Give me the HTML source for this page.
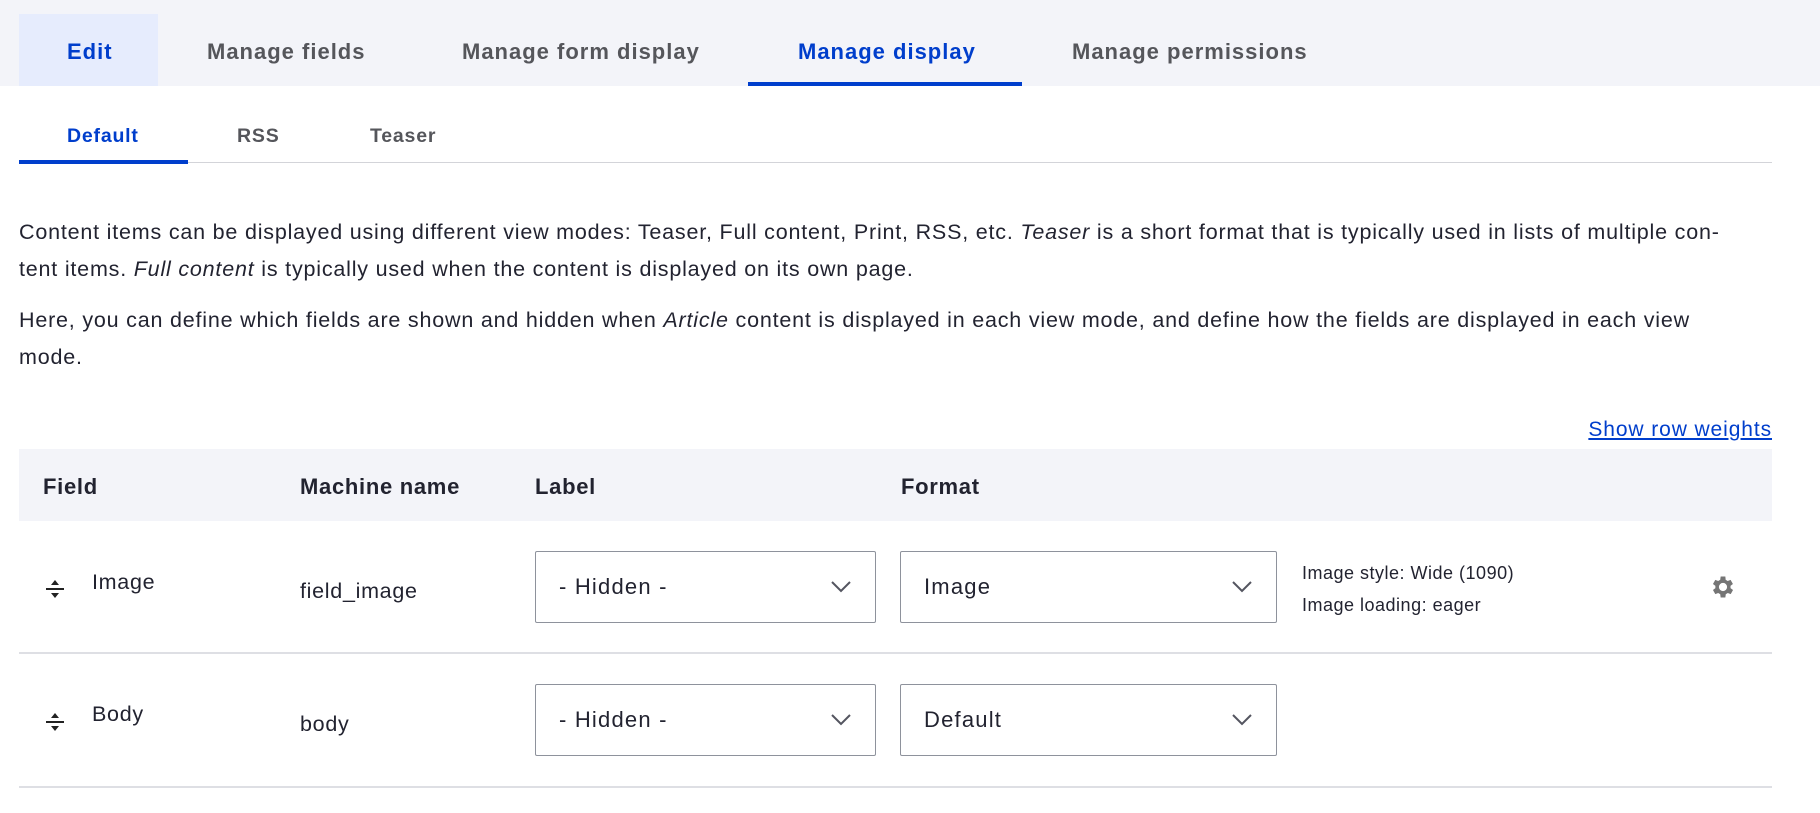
<!DOCTYPE html>
<html><head><meta charset="utf-8">
<style>
*{box-sizing:border-box;margin:0;padding:0}
body{width:1820px;height:813px;background:#fff;font-family:"Liberation Sans",sans-serif;color:#222330;position:relative;overflow:hidden}
.abs{position:absolute;white-space:nowrap}
.topbar{position:absolute;left:0;top:0;width:1820px;height:86px;background:#f3f4f9}
.tab{position:absolute;top:38px;font-weight:bold;font-size:22px;letter-spacing:1px;color:#55565b;line-height:28px}
.stab{position:absolute;top:124px;font-weight:bold;font-size:19.5px;letter-spacing:0.8px;color:#55565b;line-height:24px}
p.t{position:absolute;left:19px;font-size:21.5px;letter-spacing:0.8px;line-height:37px;width:1790px;color:#222330;white-space:nowrap}
.sel{position:absolute;height:72px;border:1px solid #8e929c;border-radius:2px;background:#fff;font-size:22px;letter-spacing:1.2px;line-height:70px;padding-left:23px}
.sel svg{position:absolute;right:24px;top:29px}
.cell{position:absolute;font-size:21.5px;letter-spacing:0.7px;line-height:28px}
.hd{position:absolute;top:473px;font-weight:bold;font-size:22px;letter-spacing:0.7px;line-height:28px}
</style></head><body>
<div class="topbar"></div>
<div class="abs" style="left:19px;top:14px;width:139px;height:72px;background:#e6ecfd"></div>
<div class="tab" style="left:67px;color:#003ecc">Edit</div>
<div class="tab" style="left:207px">Manage fields</div>
<div class="tab" style="left:462px">Manage form display</div>
<div class="tab" style="left:798px;color:#003ecc">Manage display</div>
<div class="tab" style="left:1072px">Manage permissions</div>
<div class="abs" style="left:748px;top:82px;width:274px;height:4px;background:#003ecc"></div>

<div class="stab" style="left:67px;color:#003ecc">Default</div>
<div class="stab" style="left:237px">RSS</div>
<div class="stab" style="left:370px">Teaser</div>
<div class="abs" style="left:19px;top:162px;width:1753px;height:1px;background:#d3d4d9"></div>
<div class="abs" style="left:19px;top:160px;width:169px;height:4px;background:#003ecc"></div>

<p class="t" style="top:214px">Content items can be displayed using different view modes: Teaser, Full content, Print, RSS, etc. <i>Teaser</i> is a short format that is typically used in lists of multiple con-<br>tent items. <i>Full content</i> is typically used when the content is displayed on its own page.</p>
<p class="t" style="top:302px">Here, you can define which fields are shown and hidden when <i>Article</i> content is displayed in each view mode, and define how the fields are displayed in each view<br>mode.</p>

<div class="abs" style="right:48px;top:417px;font-size:21px;letter-spacing:0.9px;line-height:26px;color:#003ecc;text-decoration:underline">Show row weights</div>

<div class="abs" style="left:19px;top:449px;width:1753px;height:72px;background:#f3f4f9"></div>
<div class="hd" style="left:43px">Field</div>
<div class="hd" style="left:300px">Machine name</div>
<div class="hd" style="left:535px">Label</div>
<div class="hd" style="left:901px">Format</div>

<!-- row 1 -->
<svg class="abs" style="left:44px;top:578px" width="22" height="22" viewBox="0 0 22 22"><path d="M11 2 L15 7 L7 7Z M2 10 H20 V12 H2Z M11 20 L15 15 L7 15Z" fill="#222"/></svg>
<div class="cell" style="left:92px;top:568px">Image</div>
<div class="cell" style="left:300px;top:577px">field_image</div>
<div class="sel" style="left:535px;top:551px;width:341px">- Hidden -<svg width="20" height="12" viewBox="0 0 20 12"><path d="M1 1 L10 10 L19 1" fill="none" stroke="#545560" stroke-width="2"/></svg></div>
<div class="sel" style="left:900px;top:551px;width:377px">Image<svg width="20" height="12" viewBox="0 0 20 12"><path d="M1 1 L10 10 L19 1" fill="none" stroke="#545560" stroke-width="2"/></svg></div>
<div class="cell" style="left:1302px;top:560px;font-size:18px;letter-spacing:0.5px;line-height:26px">Image style: Wide (1090)</div>
<div class="cell" style="left:1302px;top:592px;font-size:18px;letter-spacing:0.5px;line-height:26px">Image loading: eager</div>
<svg class="abs" style="left:1709px;top:573px" width="28" height="28" viewBox="0 0 24 24"><path fill="#757575" d="M19.4 13a7.5 7.5 0 0 0 0-2l2.1-1.6-2-3.5-2.5 1a7.6 7.6 0 0 0-1.7-1L15 3h-4l-.4 2.9a7.6 7.6 0 0 0-1.7 1l-2.5-1-2 3.5L6.5 11a7.5 7.5 0 0 0 0 2l-2.1 1.6 2 3.5 2.5-1a7.6 7.6 0 0 0 1.7 1L11 21h4l.4-2.9a7.6 7.6 0 0 0 1.7-1l2.5 1 2-3.5zM13 15.5a3.5 3.5 0 1 1 0-7 3.5 3.5 0 0 1 0 7z" transform="translate(-1 0)"/></svg>
<div class="abs" style="left:19px;top:652px;width:1753px;height:2px;background:#dedfe4"></div>

<!-- row 2 -->
<svg class="abs" style="left:44px;top:711px" width="22" height="22" viewBox="0 0 22 22"><path d="M11 2 L15 7 L7 7Z M2 10 H20 V12 H2Z M11 20 L15 15 L7 15Z" fill="#222"/></svg>
<div class="cell" style="left:92px;top:700px">Body</div>
<div class="cell" style="left:300px;top:710px">body</div>
<div class="sel" style="left:535px;top:684px;width:341px">- Hidden -<svg width="20" height="12" viewBox="0 0 20 12"><path d="M1 1 L10 10 L19 1" fill="none" stroke="#545560" stroke-width="2"/></svg></div>
<div class="sel" style="left:900px;top:684px;width:377px">Default<svg width="20" height="12" viewBox="0 0 20 12"><path d="M1 1 L10 10 L19 1" fill="none" stroke="#545560" stroke-width="2"/></svg></div>
<div class="abs" style="left:19px;top:786px;width:1753px;height:2px;background:#dedfe4"></div>
</body></html>
